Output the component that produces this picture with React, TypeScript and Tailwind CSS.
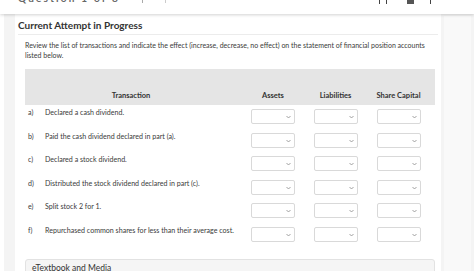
import React from "react";

const rows = [
  ["a)", "Declared a cash dividend.", "h-[24px]"],
  ["b)", "Paid the cash dividend declared in part (a).", "h-[23px]"],
  ["c)", "Declared a stock dividend.", "h-[24px]"],
  ["d)", "Distributed the stock dividend declared in part (c).", "h-[23px]"],
  ["e)", "Split stock 2 for 1.", "h-[24px]"],
  ["f)", "Repurchased common shares for less than their average cost.", "h-[23px]"],
];

function Select() {
  return (
    <div className="relative justify-self-center mt-[4px] w-[44px] h-[15px] border border-[#d9d9d9] rounded-[2px] bg-white">
      <svg className="absolute right-[3px] top-[5px] block" width="5" height="4" viewBox="0 0 5 4" fill="none">
        <path d="M0.5 1 L2.5 3 L4.5 1" stroke="#8a8a8a" strokeWidth="0.8" />
      </svg>
    </div>
  );
}

export default function App() {
  return (
    <div className="w-[474px] h-[271px] overflow-hidden bg-[#f4f4f4] font-['Lato',sans-serif] flex flex-col">
      <div className="h-[14px] shrink-0 bg-white relative z-10 shadow-[0_1px_3px_rgba(0,0,0,0.18)] overflow-hidden flex items-start">
        <div className="ml-[18px] mt-[-8px] text-[10px] leading-[12px] tracking-[2.2px] text-[#666] font-bold">Question 1 of 8</div>
        <div className="ml-[22px] w-[1px] h-[3px] bg-[#aaa]" />
        <div className="ml-[22px] w-[1px] h-[3px] bg-[#ccc]" />
        <div className="flex-1" />
        <div className="w-[1px] h-[4px] bg-[#444]" />
        <div className="ml-[6px] w-[1px] h-[4px] bg-[#444]" />
        <div className="ml-[20px] w-[7px] h-[4px] bg-[#555]" />
        <div className="ml-[16px] mr-[43px] w-[1px] h-[4px] bg-[#444]" />
      </div>
      <div className="flex flex-1 min-h-0">
        <div className="w-[4px] bg-white" />
        <div className="w-[11px]" />
        <div className="w-[426px] bg-white flex flex-col">
          <div className="h-[21px] shrink-0 mx-[3px] pt-[2px] border-b border-[#ececec] flex items-center text-[10px] font-bold text-[#333]">
            Current Attempt in Progress
          </div>
          <div className="pl-[10px] pr-[6px]">
            <p className="pt-[5px] text-[7px] leading-[10px] text-[#3a3a3a]">
              Review the list of transactions and indicate the effect (increase, decrease, no effect) on the statement of financial position accounts listed below.
            </p>
            <div className="mt-[9px] h-[36px] bg-[#e5e5e5] grid grid-cols-[212px_5px_62px_63px_63px] items-end pb-[4px] text-[7.5px] font-bold text-[#333]">
              <div className="text-center">Transaction</div>
              <div />
              <div className="text-center">Assets</div>
              <div className="text-center">Liabilities</div>
              <div className="text-center">Share Capital</div>
            </div>
            {rows.map(([l, t, h]) => (
              <div key={l} className={`${h} grid grid-cols-[20px_197px_62px_63px_63px] items-start text-[7.1px] text-[#3a3a3a]`}>
                <div className="pl-[3px] pt-[3px]">{l}</div>
                <div className="pt-[3px] whitespace-nowrap">{t}</div>
                <Select />
                <Select />
                <Select />
              </div>
            ))}
            <div className="mt-[13px] h-[20px] bg-[#f5f5f5] border border-[#e2e2e2] rounded-[3px] pl-[6px] pt-[3px] text-[8.5px] leading-[11px] text-[#333]">
              eTextbook and Media
            </div>
          </div>
        </div>
        <div className="flex-1 flex px-[3px] pt-[2px]">
          <div className="flex-1 bg-[#f9f9f9]" />
        </div>
      </div>
    </div>
  );
}
